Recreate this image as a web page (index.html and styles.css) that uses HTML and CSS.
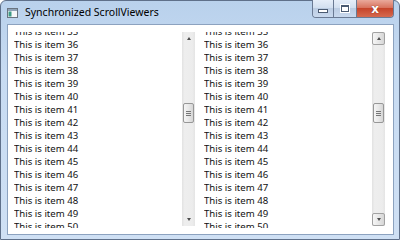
FILE: index.html
```html
<!DOCTYPE html>
<html lang="en">
<head>
    <meta charset="UTF-8">
    <title>Synchronized ScrollViewers</title>
    <link rel="stylesheet" href="styles.css">
</head>
<body>
    <!-- Window frame -->
    <div class="window">
        <!-- Title bar -->
        <div class="titlebar">
            <svg class="app-icon" width="11" height="10" viewBox="0 0 11 10">
                <rect x="0.5" y="0.5" width="10" height="9" fill="#f4f6f8" stroke="#6a7480"/>
                <rect x="1" y="1" width="9" height="2" fill="#8fa3b8"/>
                <rect x="1.5" y="3.5" width="3" height="5" fill="#3d9a86"/>
            </svg>
            <span class="title">Synchronized ScrollViewers</span>
            <div class="caption">
                <div class="cap-btn cap-min"><span class="min-glyph"></span></div>
                <div class="cap-btn cap-max"><span class="max-glyph"></span></div>
                <div class="cap-btn cap-close">x</div>
            </div>
        </div>

        <!-- Client area with the two scroll viewers -->
        <div class="client">
            <div class="pane">
                <div class="viewport">
                    <ul class="items">
                        <li>This is item 35</li>
                        <li>This is item 36</li>
                        <li>This is item 37</li>
                        <li>This is item 38</li>
                        <li>This is item 39</li>
                        <li>This is item 40</li>
                        <li>This is item 41</li>
                        <li>This is item 42</li>
                        <li>This is item 43</li>
                        <li>This is item 44</li>
                        <li>This is item 45</li>
                        <li>This is item 46</li>
                        <li>This is item 47</li>
                        <li>This is item 48</li>
                        <li>This is item 49</li>
                        <li>This is item 50</li>
                        <li>This is item 51</li>
                    </ul>
                </div>
                <div class="scrollbar">
                    <div class="sb-btn"><span class="arrow-up"></span></div>
                    <div class="sb-track"><div class="thumb"><span></span><span></span><span></span></div></div>
                    <div class="sb-btn"><span class="arrow-down"></span></div>
                </div>
            </div>

            <div class="pane">
                <div class="viewport">
                    <ul class="items">
                        <li>This is item 35</li>
                        <li>This is item 36</li>
                        <li>This is item 37</li>
                        <li>This is item 38</li>
                        <li>This is item 39</li>
                        <li>This is item 40</li>
                        <li>This is item 41</li>
                        <li>This is item 42</li>
                        <li>This is item 43</li>
                        <li>This is item 44</li>
                        <li>This is item 45</li>
                        <li>This is item 46</li>
                        <li>This is item 47</li>
                        <li>This is item 48</li>
                        <li>This is item 49</li>
                        <li>This is item 50</li>
                        <li>This is item 51</li>
                    </ul>
                </div>
                <!-- hovered scrollbar shows its buttons -->
                <div class="scrollbar hover">
                    <div class="sb-btn"><span class="arrow-up"></span></div>
                    <div class="sb-track"><div class="thumb"><span></span><span></span><span></span></div></div>
                    <div class="sb-btn"><span class="arrow-down"></span></div>
                </div>
            </div>
        </div>
    </div>
</body>
</html>
```

FILE: styles.css
```css
/* Basic reset */
body, ul {
    margin: 0;
    padding: 0;
}

body {
    width: 400px;
    height: 240px;
    overflow: hidden;
    background-color: #ffffff;
    font-family: "Noto Sans", "DejaVu Sans", sans-serif;
}

/* Aero window frame */
.window {
    box-sizing: border-box;
    width: 400px;
    height: 240px;
    border: 1px solid #5f708a;
    border-radius: 6px 6px 0 0;
    background: linear-gradient(to bottom, #b9d1ec 0%, #c7dbf2 30%, #cfe0f4 100%);
    display: flex;
    flex-direction: column;
}

/* Title bar */
.titlebar {
    height: 23px;
    flex-shrink: 0;
    display: flex;
    align-items: flex-start;
}

.app-icon {
    margin: 7px 0 0 6px;
}

.title {
    margin: 5px 0 0 7px;
    font-size: 10.5px;
    line-height: 13px;
    color: #000000;
}

.caption {
    margin-left: auto;
    margin-right: 5px;
    margin-top: -1px;
    display: flex;
    border: 1px solid #6a7a93;
    border-top: none;
    border-radius: 0 0 4px 4px;
    overflow: hidden;
}

.cap-btn {
    height: 17px;
    display: flex;
    align-items: center;
    justify-content: center;
}

.cap-min {
    width: 20px;
    border-right: 1px solid #6a7a93;
    background: linear-gradient(to bottom, #e6eef9 0%, #d3e0f0 45%, #bccde3 50%, #c9d9ee 100%);
}

.cap-max {
    width: 22px;
    border-right: 1px solid #6a7a93;
    background: linear-gradient(to bottom, #e6eef9 0%, #d3e0f0 45%, #bccde3 50%, #c9d9ee 100%);
}

.cap-close {
    width: 36px;
    background: linear-gradient(to bottom, #e9a99b 0%, #d8735e 45%, #c6452b 50%, #d66a4f 100%);
    color: #ffffff;
    font-family: "DejaVu Sans", sans-serif;
    font-weight: bold;
    font-size: 12px;
    line-height: 12px;
    text-shadow: 0 0 1px #6d1c10;
}

.min-glyph {
    width: 8px;
    height: 2px;
    margin-top: 5px;
    background-color: #ffffff;
    border: 1px solid #4b5b72;
}

.max-glyph {
    width: 6px;
    height: 4px;
    border: 1px solid #4b5b72;
    border-top-width: 2px;
    background-color: #ffffff;
    outline: 1px solid #ffffff;
}

/* Client area */
.client {
    flex: 1;
    min-height: 0;
    margin: 0 5px 4px 6px;
    border: 1px solid #8ca2bf;
    background-color: #ffffff;
    padding: 7px 8px 6px 6px;
    display: flex;
    gap: 9px;
}

.pane {
    width: 181px;
    min-height: 0;
    display: flex;
    overflow: hidden;
}

.viewport {
    flex: 1;
    overflow: hidden;
}

.items {
    list-style: none;
    margin-top: -7px;
    font-size: 9.6px;
    line-height: 13px;
    color: #111111;
}

/* Scrollbar */
.scrollbar {
    width: 13px;
    margin-bottom: 2px;
    display: flex;
    flex-direction: column;
    background: linear-gradient(to right, #e2e2e2 0%, #eeeeee 20%, #ececec 80%, #e4e4e4 100%);
}

.sb-btn {
    height: 13px;
    flex-shrink: 0;
    display: flex;
    align-items: center;
    justify-content: center;
    box-sizing: border-box;
}

.scrollbar.hover .sb-btn {
    border: 1px solid #a2a2a2;
    border-radius: 2px;
    background: linear-gradient(to right, #f6f6f6 0%, #e6e6e6 55%, #d6d6d6 100%);
}

.arrow-up {
    width: 0;
    height: 0;
    border-left: 2.5px solid transparent;
    border-right: 2.5px solid transparent;
    border-bottom: 3px solid #4d4d4d;
}

.arrow-down {
    width: 0;
    height: 0;
    border-left: 2.5px solid transparent;
    border-right: 2.5px solid transparent;
    border-top: 3px solid #4d4d4d;
}

.sb-track {
    flex: 1;
}

.thumb {
    box-sizing: border-box;
    height: 20px;
    margin: 58px 1px 0 1px;
    border: 1px solid #979797;
    border-radius: 2px;
    background: linear-gradient(to right, #f5f5f5 0%, #e8e8e8 50%, #d5d5d5 100%);
    display: flex;
    flex-direction: column;
    align-items: center;
    justify-content: center;
    gap: 1px;
}

.thumb span {
    width: 5px;
    height: 1px;
    background-color: #777777;
}
```
